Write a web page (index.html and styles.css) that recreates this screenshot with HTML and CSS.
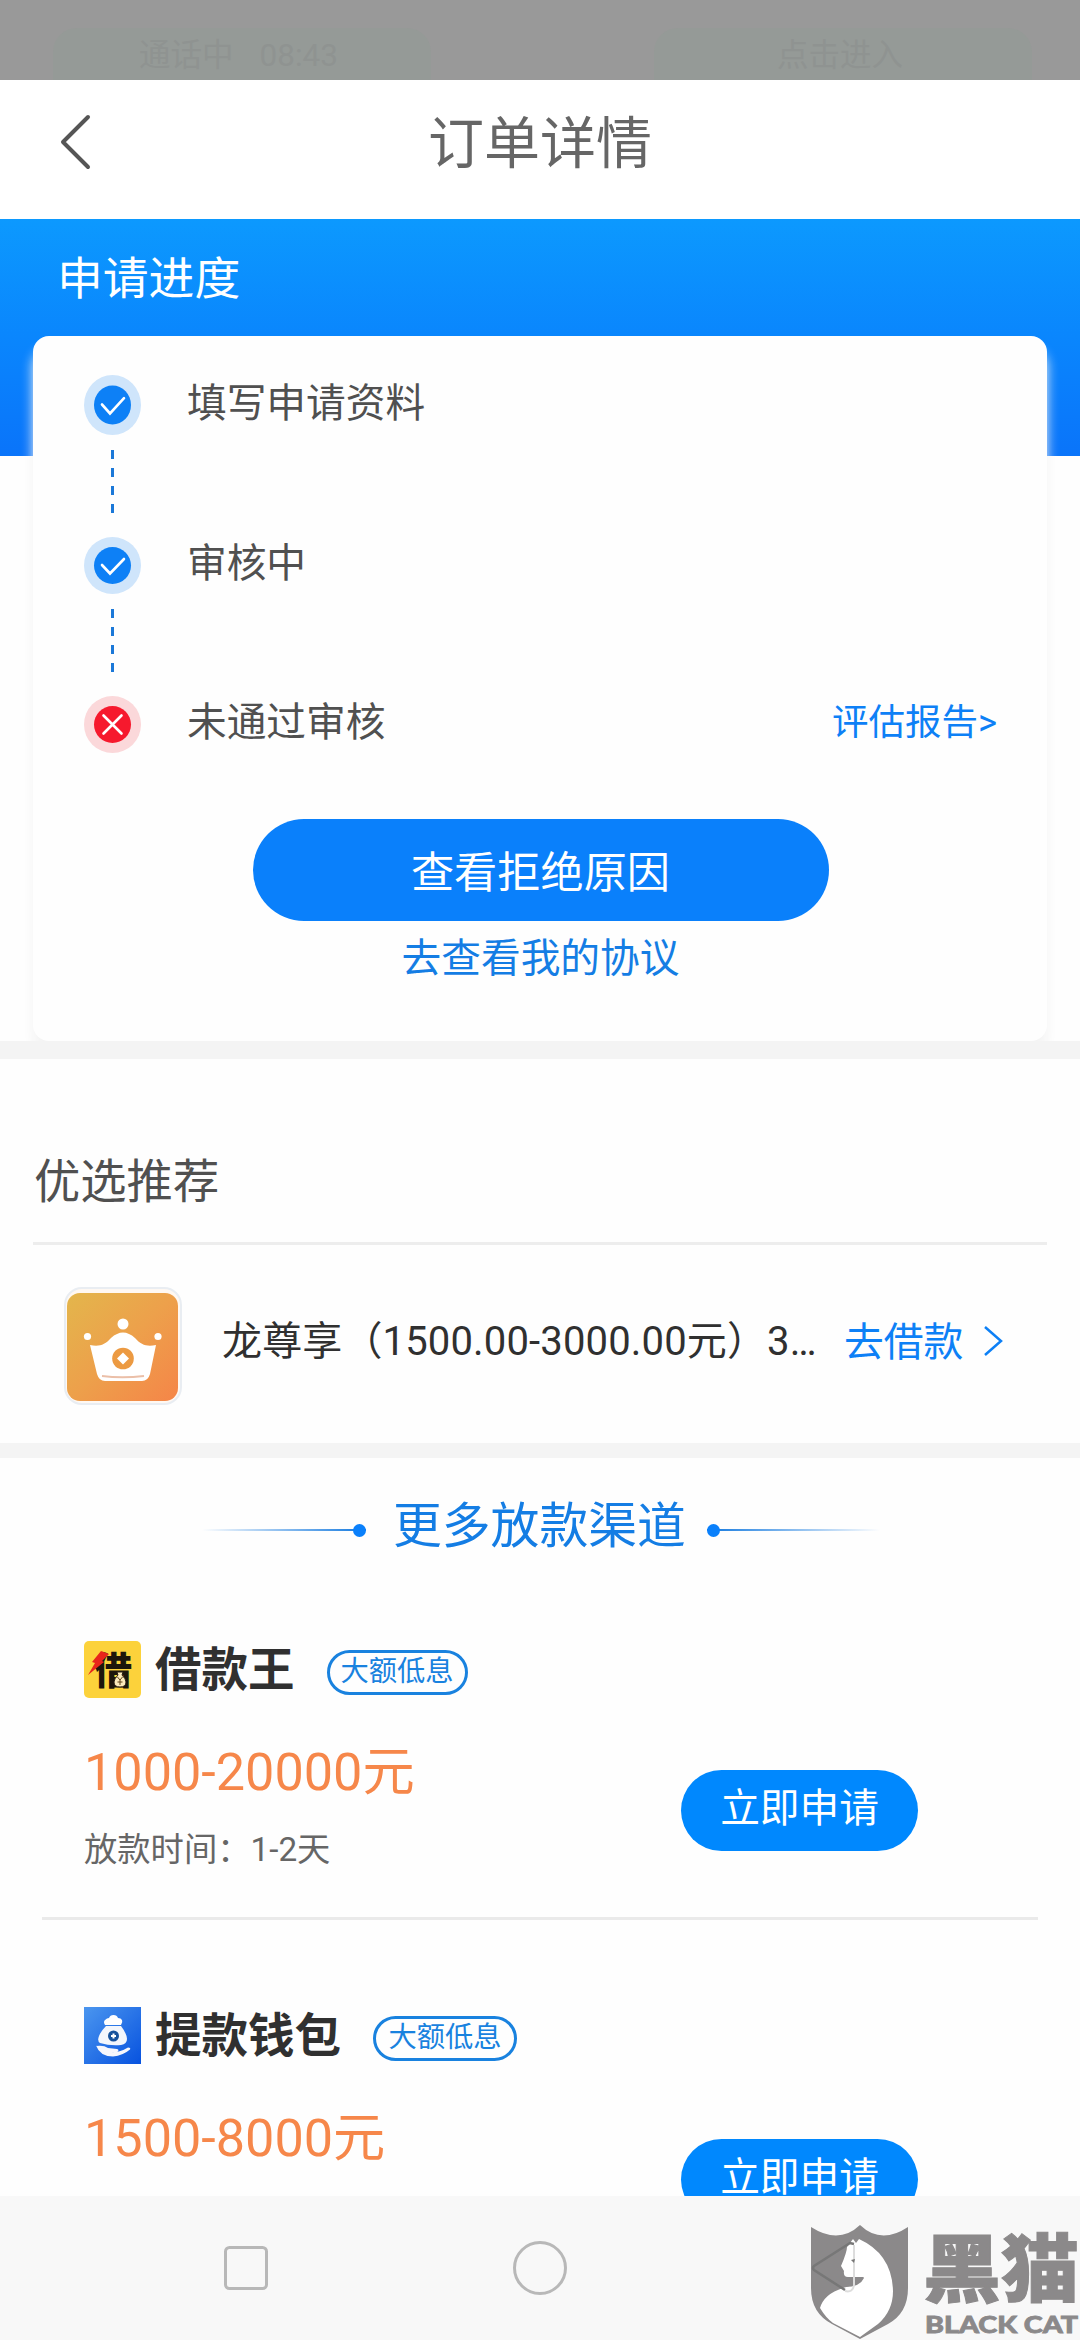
FILE: index.html
```html
<!DOCTYPE html>
<html lang="zh-CN">
<head>
<meta charset="utf-8">
<title>订单详情</title>
<link rel="stylesheet" href="styles.css">
</head>
<body>
<div class="phone">
  <div class="status"><div class="pill call"><span>通话中</span><span>08:43</span></div><div class="pill enter">点击进入</div></div>
  <header class="header">
    <svg class="back" viewBox="0 0 34 56"><path d="M29 3 4 28l25 25" fill="none" stroke="#555" stroke-width="4" stroke-linecap="round" stroke-linejoin="round"/></svg>
    <h1>订单详情</h1>
  </header>
  <main class="content">
    <section class="progress">
      <h2>申请进度</h2>
      <div class="card">
        <ol class="steps">
          <li class="step first">
            <svg class="mark" viewBox="0 0 57 57" preserveAspectRatio="none"><circle cx="28.5" cy="28.5" r="28.5" fill="#cfe5fb"/><circle cx="28.5" cy="28.5" r="18.5" fill="#0d80f6"/><path d="m18 28 8 8.500 14-14.500" fill="none" stroke="#fff" stroke-width="2.6" stroke-linecap="round"/></svg>
            <span>填写申请资料</span>
          </li>
          <li class="link"></li>
          <li class="step">
            <svg class="mark" viewBox="0 0 57 57"><circle cx="28.5" cy="28.5" r="28.5" fill="#cfe5fb"/><circle cx="28.5" cy="28.5" r="18.5" fill="#0d80f6"/><path d="m18 28 8 8.500 14-14.500" fill="none" stroke="#fff" stroke-width="2.6" stroke-linecap="round"/></svg>
            <span>审核中</span>
          </li>
          <li class="link"></li>
          <li class="step">
            <svg class="mark" viewBox="0 0 57 57"><circle cx="28.5" cy="28.5" r="28.5" fill="#fbd8da"/><circle cx="28.5" cy="28.5" r="18.5" fill="#f6192d"/><path d="m19.500 19.500 18 18m0-18-18 18" fill="none" stroke="#fff" stroke-width="2.6" stroke-linecap="round"/></svg>
            <span>未通过审核</span><a class="report">评估报告&gt;</a>
          </li>
        </ol>
        <button class="reason">查看拒绝原因</button>
        <a class="agreement">去查看我的协议</a>
      </div>
    </section>
    <section class="recommend">
      <h2>优选推荐</h2>
      <div class="product">
        <svg class="crown" viewBox="0 0 118 118">
          <defs><linearGradient id="gold" x1="0" y1="0" x2="1" y2="1"><stop offset="0" stop-color="#e3b64c"/><stop offset=".5" stop-color="#eda04b"/><stop offset="1" stop-color="#f58548"/></linearGradient></defs>
          <rect x="1" y="1" width="116" height="116" rx="17" fill="#fff8f2" stroke="#e9edf2" stroke-width="2"/>
          <rect x="3" y="6" width="111" height="108" rx="13" fill="url(#gold)"/>
          <circle cx="59" cy="37" r="5.500" fill="#fff"/><circle cx="23.500" cy="49.500" r="3.600" fill="#fff"/><circle cx="94" cy="49.500" r="3.600" fill="#fff"/>
          <path d="M26 58c9 2 15 0 21-7q6-5.500 12-5.500t12 5.500c6 7 12 9 21 7l-6 29q-2 7-8 7H41q-6 0-8-7z" fill="#fff"/>
          <path d="M38 89q20 2.500 42 0" fill="none" stroke="#ebbfa8" stroke-width="1.800"/>
          <circle cx="59" cy="71.500" r="10.800" fill="#ec9a42"/><path d="M59 65.500 65 71.500 59 77.500 53 71.500z" fill="#fff"/>
        </svg>
        <span class="pname">龙尊享（1500.00-3000.00元）3…</span>
        <a class="borrow">去借款</a>
        <svg class="go" viewBox="0 0 20 32"><path d="m2 2 16 14L2 30" fill="none" stroke="#0d80f6" stroke-width="2.500"/></svg>
      </div>
    </section>
    <section class="more">
      <div class="more-title"><i class="rule left"></i><h2>更多放款渠道</h2><i class="rule right"></i></div>
      <article class="loan">
        <div>
          <div class="loan-head">
            <svg class="logo" viewBox="0 0 57 57">
              <rect width="57" height="57" rx="5" fill="#fcd23b"/>
              <text class="logo-word" x="10" y="43">借</text>
              <path d="m17 10 8 3-7 7 2 1L4 34l7-12-3-1z" fill="#e8251b"/>
              <path d="M33 31h6l-1 3q4 4 4 7 0 5-6 5t-6-5q0-3 4-7z" fill="#fcebbc" stroke="#2a2115"/>
              <path d="m33.500 36 2.500 3 2.500-3M36 39v5m-2.500-3h5" fill="none" stroke="#5e4219" stroke-width="1"/>
            </svg>
            <h3>借款王</h3><span class="tag">大额低息</span>
          </div>
          <p class="amount">1000-20000元</p>
          <p class="time">放款时间：1-2天</p>
        </div>
        <button class="apply">立即申请</button>
      </article>
      <article class="loan second">
        <div>
          <div class="loan-head">
            <svg class="logo" viewBox="0 0 57 57">
              <defs><linearGradient id="blue" x1="0" y1="0" x2="1" y2="1"><stop offset="0" stop-color="#4b96ef"/><stop offset="1" stop-color="#0752df"/></linearGradient></defs>
              <rect width="57" height="57" fill="url(#blue)"/>
              <path d="M21 18q-2-3 0-5t4-2q1-3 4.500-3t4.500 3q3 0 4 2t-1 5z" fill="#fff"/>
              <path d="M22 19h15q6 8 6 13 0 5-6 6-11 1-21-2-3-2-1-7t7-10z" fill="#f3f6fc"/>
              <circle cx="29.500" cy="29" r="5.500" fill="#17529c"/><path d="M29.500 26.500v5M27 29h5" stroke="#fff" stroke-width="2"/>
              <path d="M12 39q8-1 12 2l9 1q3 1 0 3l-7 .5q10 0 18-5 3 0 2 2-7 6-17 7-13 0-17-11z" fill="#f7f7fc"/>
            </svg>
            <h3>提款钱包</h3><span class="tag wide">大额低息</span>
          </div>
          <p class="amount">1500-8000元</p>
        </div>
        <button class="apply">立即申请</button>
      </article>
    </section>
  </main>
  <nav class="nav">
    <svg viewBox="0 0 60 60"><rect x="9.500" y="9.500" width="41" height="41" rx="4" /></svg>
    <svg viewBox="0 0 60 60"><circle cx="30" cy="30" r="25.500"/></svg>
    <svg viewBox="0 0 60 60"><path d="M44 6 10 27q-3 3 0 6l29 19q9 2 9-6V10q0-5-4-4z"/></svg>
  </nav>
  <svg class="watermark" viewBox="0 0 280 125">
    <path d="M11 12q28 18 49-2 21 20 48 2v61q0 25-20 36l-28 15-28-15Q11 98 11 73z" fill="#8b898a"/>
    <path d="M53 24l3 4 3-4q33 15 34 52 0 20-15 33l-18 13-27-14q-7-5-13-15 4-14 23-20l13-4q5-2 8-7H48q-5 0-4-6l-3-5q6-14 6-19z" fill="#fff"/>
    <path d="M43 63h21q-4 9-19 9 6-3 3-9z" fill="#8b898a"/>
    <path d="m54 29-4-1-36 23q-2 2 0 4l31 20" fill="none" stroke="#777" stroke-width="2.500"/>
    <path d="M54 30v40q-1 8-9 6" fill="none" stroke="#ddd" stroke-width="2"/>
    <path d="m51 45 4-1-1 4z" fill="#777"/>
    <text class="wm-cn" x="123" y="81" textLength="156" lengthAdjust="spacingAndGlyphs">黑猫</text>
    <text class="wm-en" x="125" y="118" textLength="153" lengthAdjust="spacingAndGlyphs">BLACK CAT</text>
  </svg>
</div>
</body>
</html>
```
FILE: styles.css
```css
* { box-sizing: border-box; margin: 0; padding: 0; }
body { background: #fefefe; font-family: Roboto, "Noto Sans CJK SC", sans-serif; color: #505050; }
h1, h2 { font-weight: 400; }
button { border: 0; font: inherit; color: #fff; display: block; }
.phone { width: 1080px; height: 2340px; position: relative; overflow: hidden; display: flex; flex-direction: column; }

.status { height: 80px; flex: none; background: #999; display: flex; justify-content: space-between; padding: 28px 48px 0 53px; color: #8f9391; font-size: 31.500px; line-height: 56px; }
.pill { width: 378px; border-radius: 24px 24px 0 0; background: #959a97; }
.call { display: flex; gap: 26px; padding-left: 86px; }
.enter { padding-left: 123px; }

.header { height: 139px; flex: none; display: flex; align-items: center; justify-content: center; position: relative; background: #fff; padding-bottom: 12px; }
.header h1 { font-size: 56px; line-height: 70px; color: #666; }
.back { position: absolute; left: 59px; top: 34px; width: 34px; height: 56px; }

.content { flex: 1; min-height: 0; overflow: hidden; }
.progress { height: 822px; padding: 31px 33px 0; overflow: hidden; background: linear-gradient(#0c99fe, #0a86fd 50%, #0a74fa) 0 0 / 100% 237px no-repeat; }
.progress h2 { color: #fff; font-size: 45.800px; line-height: 60px; padding-left: 24px; }
.card { height: 705px; margin-top: 26px; background: #fefefe; border-radius: 16px; box-shadow: 0 14px 12px #f4f4f4; padding: 39px 50px 0 51px; }
.steps { list-style: none; }
.step { display: flex; align-items: center; height: 57px; font-size: 39.700px; line-height: 50px; padding-bottom: 0; }
.step span { margin-left: 46px; margin-top: -4px; }
.mark { width: 57px; height: 57px; flex: none; }
.first, .first .mark { height: 60px; }
.first span { margin-top: -2px; }
.link { width: 3px; height: 72px; margin: 15px 0 15px 27px; background: repeating-linear-gradient(#1b78d8 0 9px, transparent 9px 18px); }
.step .report { margin: -4px 0 0 auto; font-size: 36.500px; color: #0d80f6; }
.reason { width: 576px; height: 102px; border-radius: 51px; background: #0a80fb; font-size: 43.200px; margin: 66px auto 0; padding-bottom: 3px; }
.agreement { display: block; text-align: center; font-size: 39.700px; line-height: 60px; color: #147de4; margin-top: 8px; }

.recommend { border-top: 18px solid #f4f4f4; border-bottom: 15px solid #f4f4f4; height: 417px; padding: 0 33px; }
.recommend h2 { height: 186px; padding: 92px 0 0 1px; font-size: 46.300px; line-height: 62px; border-bottom: 3px solid #ededed; }
.product { display: flex; align-items: center; height: 192px; padding: 0 44px 0 31px; font-size: 39.800px; }
.crown { width: 118px; height: 118px; margin-top: 9px; }
.pname { color: #303030; margin: -6px 0 0 40px; white-space: nowrap; width: 622px; font-size: 40px; letter-spacing: .15px; }
.borrow { color: #0d80f6; white-space: nowrap; margin-top: -6px; }
.go { width: 20px; height: 32px; margin-left: auto; }

.more-title { display: flex; align-items: center; height: 138px; padding-left: 202px; }
.more-title h2 { color: #147de4; font-size: 48.800px; line-height: 60px; margin: -1px 21px 0 27px; }
.rule { height: 2px; width: 164px; background: linear-gradient(90deg, transparent, #1379df); position: relative; top: 3px; }
.rule.right { width: 173px; transform: scaleX(-1); }
.rule::after { content: ""; position: absolute; right: 0; top: -5px; width: 13px; height: 13px; border-radius: 50%; background: #0a80fb; }
.loan { height: 324px; margin: 0 42px; padding: 45px 120px 0 42px; display: flex; justify-content: space-between; border-bottom: 3px solid #eaeaea; }
.second { padding-top: 87px; height: 420px; }
.loan-head { display: flex; align-items: center; height: 57px; }
.logo { width: 57px; height: 57px; }
.logo-word { font: 900 38px "Noto Sans CJK SC", sans-serif; fill: #1d160c; }
.loan h3 { font-size: 46.500px; line-height: 57px; margin: 2px 0 0 14px; color: #303030; font-weight: 700; }
.tag { margin: 6px 0 0 32px; width: 141px; height: 45px; border: 3px solid #1982df; border-radius: 23px; color: #1982df; font-size: 28.300px; line-height: 38px; text-align: center; }
.wide { width: 144px; }
.amount { font-size: 52.200px; color: #f6874a; line-height: 60px; margin-top: 45px; white-space: nowrap; }
.time { font-size: 33.300px; line-height: 40px; margin-top: 27px; color: #666; }
.apply { width: 237px; height: 81px; border-radius: 41px; background: #0088fe; font-size: 39.700px; line-height: 71px; padding-bottom: 5px; margin-top: 129px; }
.second .apply { margin-top: 132px; }

.nav { height: 144px; flex: none; background: #f8f8f8; display: flex; justify-content: center; align-items: center; gap: 234px; }
.nav svg { width: 60px; height: 60px; fill: none; stroke: #b8b8b8; stroke-width: 3; }
.watermark { position: absolute; right: 0; bottom: 0; width: 280px; height: 125px; }
.wm-cn { font: 900 74px "Noto Sans CJK SC", sans-serif; fill: #8b898a; stroke: #8b898a; stroke-width: 1; }
.wm-en { font: 900 23px Lato, sans-serif; fill: #8b898a; stroke: #8b898a; stroke-width: .8; }
```
